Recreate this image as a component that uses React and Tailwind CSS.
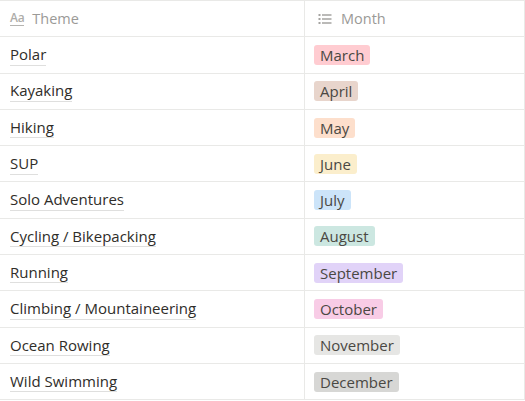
import React from "react";

const rows = [
  ["Polar", "March", "bg-[#ffccd1]"],
  ["Kayaking", "April", "bg-[#e8d5cc]"],
  ["Hiking", "May", "bg-[#fddfcc]"],
  ["SUP", "June", "bg-[#fbeecc]"],
  ["Solo Adventures", "July", "bg-[#cce4f9]"],
  ["Cycling / Bikepacking", "August", "bg-[#cce7e1]"],
  ["Running", "September", "bg-[#e1d3f8]"],
  ["Climbing / Mountaineering", "October", "bg-[#f8cce6]"],
  ["Ocean Rowing", "November", "bg-[#e6e6e4]"],
  ["Wild Swimming", "December", "bg-[#d7d7d5]"],
];

function ListIcon() {
  return (
    <svg width="14" height="14" viewBox="0 0 14 14" className="shrink-0">
      <g fill="#a5a4a1">
        <rect x="0.5" y="2" width="2" height="2" />
        <rect x="0.5" y="6" width="2" height="2" />
        <rect x="0.5" y="10" width="2" height="2" />
        <rect x="4" y="2.25" width="9.5" height="1.5" />
        <rect x="4" y="6.25" width="9.5" height="1.5" />
        <rect x="4" y="10.25" width="9.5" height="1.5" />
      </g>
    </svg>
  );
}

export default function App() {
  return (
    <div
      className="w-[525px] h-[401px] bg-white text-[15px] text-[#37352f] overflow-hidden"
      style={{ fontFamily: '"Open Sans", "Noto Sans", sans-serif' }}
    >
      <div className="w-[525px] border-t border-[#e9e9e7]">
        <div className="flex h-[36.3px] border-b border-[#e9e9e7] text-[14.5px]">
          <div className="w-[305px] flex items-center pl-[10px] border-r border-[#e9e9e7] text-[#9b9a97]">
            <span className="text-[12px] font-semibold leading-none border-b-[1.5px] border-[#b5b4b1] text-[#aeada9] pb-[1px] mr-[8px] tracking-[-0.3px]">
              Aa
            </span>
            <span>Theme</span>
          </div>
          <div className="flex-1 flex items-center pl-[13px] gap-[9px] border-r border-[#e9e9e7] text-[#9b9a97]">
            <ListIcon />
            <span>Month</span>
          </div>
        </div>
        {rows.map(([t, m, c]) => (
          <div key={t} className="flex h-[36.3px] border-b border-[#e9e9e7]">
            <div className="w-[305px] flex items-center pl-[10px] border-r border-[#e9e9e7]">
              <span className="leading-[1.3] pt-[1px] border-b border-[rgba(55,53,47,0.16)] font-medium text-[#2f2d29]">
                {t}
              </span>
            </div>
            <div className="flex-1 flex items-center pl-[9px] border-r border-[#e9e9e7]">
              <span className={`${c} h-[20px] leading-[20px] px-[6px] rounded-[3px] text-[#4a4843]`}>
                {m}
              </span>
            </div>
          </div>
        ))}
      </div>
    </div>
  );
}
